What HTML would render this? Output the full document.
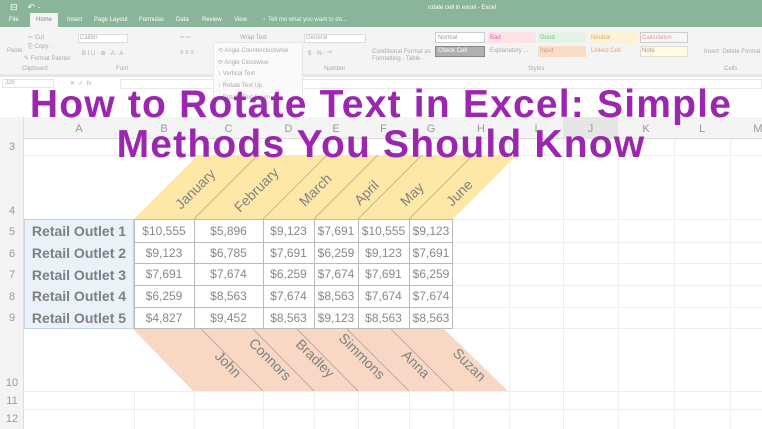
<!DOCTYPE html>
<html><head><meta charset="utf-8"><style>
*{margin:0;padding:0;box-sizing:border-box}
body{width:762px;height:429px;overflow:hidden;background:#fff;font-family:"Liberation Sans",sans-serif;position:relative}
.a{position:absolute}
.t{font-size:6px;color:#aaa;white-space:nowrap}
.hdr{font-size:11px;color:#999;text-align:center}
.rn{font-size:11px;color:#999;width:24px;text-align:center}
.cell{position:absolute;font-size:12px;color:#888;text-align:center;line-height:22px}
.ol{position:absolute;left:24px;width:110px;background:#eaf1f9;color:#7f7f7f;font-weight:bold;font-size:14px;line-height:22px;text-align:center}
.title{position:absolute;left:0;width:762px;text-align:center;color:#9b27af;font-weight:bold;font-size:39px;line-height:42px;letter-spacing:1.2px}
</style></head><body>
<div class="a" style="left:0;top:0;width:762px;height:27px;background:#8ab59a"></div>
<div class="a" style="left:30px;top:13px;width:28px;height:14px;background:#f3f3f3"></div>
<div class="a t" style="left:9px;top:17px;color:#fff">File</div>
<div class="a t" style="left:36px;top:17px;color:#888">Home</div>
<div class="a t" style="left:67px;top:17px;color:#fff">Insert</div>
<div class="a t" style="left:94px;top:17px;color:#fff">Page Layout</div>
<div class="a t" style="left:139px;top:17px;color:#fff">Formulas</div>
<div class="a t" style="left:176px;top:17px;color:#fff">Data</div>
<div class="a t" style="left:202px;top:17px;color:#fff">Review</div>
<div class="a t" style="left:234px;top:17px;color:#fff">View</div>
<div class="a t" style="left:262px;top:17px;color:#dfe">♀ Tell me what you want to do...</div>
<div class="a t" style="left:428px;top:5px;color:#fff">rotate cell in excel - Excel</div>
<div class="a t" style="left:10px;top:2px;color:#fff;font-size:9px">⊟ &nbsp;&nbsp; ↶ ·</div>
<div class="a" style="left:0;top:27px;width:762px;height:50px;background:#f4f4f4;border-bottom:3px solid #e6e6e6"></div>
<div class="a t" style="left:28px;top:34px">✂ Cut</div>
<div class="a t" style="left:28px;top:44px">⎘ Copy ·</div>
<div class="a t" style="left:24px;top:55px">✎ Format Painter</div>
<div class="a t" style="left:7px;top:48px">Paste</div>
<div class="a t" style="left:22px;top:66px">Clipboard</div>
<div class="a" style="left:78px;top:34px;width:50px;height:9px;border:1px solid #ddd;background:#fff"></div>
<div class="a t" style="left:80px;top:35px">Calibri</div>
<div class="a t" style="left:82px;top:50px">B I U · ⊞ · A · A</div>
<div class="a t" style="left:116px;top:66px">Font</div>
<div class="a t" style="left:180px;top:35px">═ ═ </div>
<div class="a t" style="left:180px;top:50px">≡ ≡ ≡</div>
<div class="a t" style="left:240px;top:35px">Wrap Text</div>
<div class="a" style="left:304px;top:34px;width:62px;height:9px;border:1px solid #ddd;background:#fff"></div>
<div class="a t" style="left:306px;top:35px">General</div>
<div class="a t" style="left:308px;top:50px">$ · % ·  ⁰⁰</div>
<div class="a t" style="left:324px;top:66px">Number</div>
<div class="a t" style="left:372px;top:49px">Conditional Format as</div>
<div class="a t" style="left:372px;top:56px">Formatting · Table ·</div>
<div class="a" style="left:435px;top:32px;width:50px;height:11px;background:#fff;border:1px solid #ccc"></div><div class="a t" style="left:438px;top:35px;color:#999">Normal</div>
<div class="a" style="left:488px;top:32px;width:48px;height:11px;background:#fbe3e6"></div><div class="a t" style="left:490px;top:35px;color:#e5a">Bad</div>
<div class="a" style="left:538px;top:32px;width:48px;height:11px;background:#e4f3e6"></div><div class="a t" style="left:540px;top:35px;color:#7b7">Good</div>
<div class="a" style="left:589px;top:32px;width:48px;height:11px;background:#fdf2d4"></div><div class="a t" style="left:591px;top:35px;color:#ca8">Neutral</div>
<div class="a" style="left:640px;top:32px;width:48px;height:11px;background:#f6f6f6;border:1px solid #ccc"></div><div class="a t" style="left:642px;top:35px;color:#e99">Calculation</div>
<div class="a" style="left:435px;top:46px;width:50px;height:11px;background:#b0b0b0;border:1px solid #888"></div><div class="a t" style="left:438px;top:48px;color:#fff">Check Cell</div>
<div class="a t" style="left:490px;top:48px">Explanatory ...</div>
<div class="a" style="left:538px;top:46px;width:48px;height:11px;background:#fbdcc6"></div><div class="a t" style="left:540px;top:48px;color:#c98">Input</div>
<div class="a t" style="left:591px;top:48px;color:#e9a070">Linked Cell</div>
<div class="a" style="left:640px;top:46px;width:48px;height:11px;background:#fffbe0;border:1px solid #ddd"></div><div class="a t" style="left:642px;top:48px;color:#999">Note</div>
<div class="a t" style="left:528px;top:66px">Styles</div>
<div class="a t" style="left:704px;top:49px">Insert &nbsp;Delete Format</div>
<div class="a t" style="left:724px;top:66px">Cells</div>
<div class="a" style="left:0;top:77px;width:762px;height:40px;background:#fff"></div>
<div class="a" style="left:2px;top:79px;width:52px;height:9px;border:1px solid #e6e6e6"></div>
<div class="a t" style="left:5px;top:80px">J26</div>
<div class="a t" style="left:70px;top:80px">✕ &nbsp;✓ &nbsp;fx</div>
<div class="a" style="left:120px;top:79px;width:642px;height:10px;border:1px solid #e8e8e8"></div>
<div class="a" style="left:213px;top:42px;width:90px;height:76px;background:#fafafa;border:1px solid #e8e8e8"></div>
<div class="a t" style="left:218px;top:47px">⟲ Angle Counterclockwise</div>
<div class="a t" style="left:218px;top:59px">⟳ Angle Clockwise</div>
<div class="a t" style="left:218px;top:71px">↕ Vertical Text</div>
<div class="a t" style="left:218px;top:83px">↑ Rotate Text Up</div>
<div class="a t" style="left:218px;top:95px">↓ Rotate Text Down</div>
<div class="a" style="left:0;top:117px;width:762px;height:22px;background:#f4f4f4;border-bottom:1px solid #ddd"></div>
<div class="a" style="left:0;top:117px;width:24px;height:312px;background:#f4f4f4;border-right:1px solid #ddd"></div>
<div class="a" style="left:563px;top:117px;width:55px;height:22px;background:#e6e6e6"></div>
<div class="a hdr" style="left:24px;top:123px;width:110px">A</div>
<div class="a hdr" style="left:134px;top:123px;width:60px">B</div>
<div class="a hdr" style="left:194px;top:123px;width:69px">C</div>
<div class="a hdr" style="left:263px;top:123px;width:51px">D</div>
<div class="a hdr" style="left:314px;top:123px;width:44px">E</div>
<div class="a hdr" style="left:358px;top:123px;width:51px">F</div>
<div class="a hdr" style="left:409px;top:123px;width:44px">G</div>
<div class="a hdr" style="left:453px;top:123px;width:56px">H</div>
<div class="a hdr" style="left:509px;top:123px;width:54px">I</div>
<div class="a hdr" style="left:563px;top:123px;width:55px">J</div>
<div class="a hdr" style="left:618px;top:123px;width:56px">K</div>
<div class="a hdr" style="left:674px;top:123px;width:56px">L</div>
<div class="a hdr" style="left:730px;top:123px;width:56px">M</div>
<div class="a rn" style="left:0;top:141px">3</div>
<div class="a rn" style="left:0;top:205px">4</div>
<div class="a rn" style="left:0;top:226px">5</div>
<div class="a rn" style="left:0;top:248px">6</div>
<div class="a rn" style="left:0;top:269px">7</div>
<div class="a rn" style="left:0;top:291px">8</div>
<div class="a rn" style="left:0;top:312px">9</div>
<div class="a rn" style="left:0;top:377px">10</div>
<div class="a rn" style="left:0;top:395px">11</div>
<div class="a rn" style="left:0;top:413px">12</div>
<svg class="a" style="left:0;top:0" width="762" height="429">
<g stroke="#eee" stroke-width="1">
<line x1="24" y1="155.5" x2="762" y2="155.5"/><line x1="24" y1="219.5" x2="762" y2="219.5"/>
<line x1="24" y1="391.5" x2="762" y2="391.5"/><line x1="24" y1="409.5" x2="762" y2="409.5"/>
<line x1="453" y1="242.5" x2="762" y2="242.5"/><line x1="453" y1="263.5" x2="762" y2="263.5"/>
<line x1="453" y1="285.5" x2="762" y2="285.5"/><line x1="453" y1="307.5" x2="762" y2="307.5"/><line x1="453" y1="328.5" x2="762" y2="328.5"/>
<line x1="509.5" y1="139" x2="509.5" y2="429"/><line x1="563.5" y1="139" x2="563.5" y2="429"/><line x1="618.5" y1="139" x2="618.5" y2="429"/><line x1="674.5" y1="139" x2="674.5" y2="429"/><line x1="730.5" y1="139" x2="730.5" y2="429"/>
<line x1="134.5" y1="391" x2="134.5" y2="429"/><line x1="194.5" y1="391" x2="194.5" y2="429"/><line x1="263.5" y1="391" x2="263.5" y2="429"/><line x1="314.5" y1="391" x2="314.5" y2="429"/><line x1="358.5" y1="391" x2="358.5" y2="429"/><line x1="409.5" y1="391" x2="409.5" y2="429"/><line x1="453.5" y1="391" x2="453.5" y2="429"/>
</g>
<polygon points="134,219 453,219 517,155 198,155" fill="#fde8a8"/>
<g stroke="#c8b98a" stroke-width="1"><line x1="194" y1="219" x2="258" y2="155"/><line x1="263" y1="219" x2="327" y2="155"/><line x1="314" y1="219" x2="378" y2="155"/><line x1="358" y1="219" x2="422" y2="155"/><line x1="409" y1="219" x2="473" y2="155"/></g>
<polygon points="132,328 443,328 508,391 193,391" fill="#f8d8c4"/>
<g stroke="#c8a898" stroke-width="1"><line x1="200" y1="328" x2="263" y2="391"/><line x1="252" y1="328" x2="314" y2="391"/><line x1="296" y1="328" x2="358" y2="391"/><line x1="346" y1="328" x2="409" y2="391"/><line x1="390" y1="328" x2="453" y2="391"/></g>
<g fill="#808080" font-family="Liberation Sans,sans-serif" font-size="14">
<text transform="translate(181,210) rotate(-45)">January</text>
<text transform="translate(240,213) rotate(-45)">February</text>
<text transform="translate(305,207) rotate(-45)">March</text>
<text transform="translate(360,206) rotate(-45)">April</text>
<text transform="translate(406,207) rotate(-45)">May</text>
<text transform="translate(452,207) rotate(-45)">June</text>
<text transform="translate(214,357) rotate(45)">John</text>
<text transform="translate(248,344) rotate(45)">Connors</text>
<text transform="translate(295,345) rotate(45)">Bradley</text>
<text transform="translate(338,339) rotate(45)">Simmons</text>
<text transform="translate(401,356) rotate(45)">Anna</text>
<text transform="translate(452,354) rotate(45)">Suzan</text>
</g>
<g stroke="#bbb" stroke-width="1" fill="none">
<rect x="134.5" y="219.5" width="318" height="109"/>
<line x1="134" y1="242.5" x2="453" y2="242.5"/><line x1="134" y1="263.5" x2="453" y2="263.5"/><line x1="134" y1="285.5" x2="453" y2="285.5"/><line x1="134" y1="307.5" x2="453" y2="307.5"/>
<line x1="194.5" y1="219" x2="194.5" y2="328"/><line x1="263.5" y1="219" x2="263.5" y2="328"/><line x1="314.5" y1="219" x2="314.5" y2="328"/><line x1="358.5" y1="219" x2="358.5" y2="328"/><line x1="409.5" y1="219" x2="409.5" y2="328"/>
</g>
</svg>
<div class="ol" style="top:220px">Retail Outlet 1</div>
<div class="ol" style="top:242px">Retail Outlet 2</div>
<div class="ol" style="top:264px">Retail Outlet 3</div>
<div class="ol" style="top:285px">Retail Outlet 4</div>
<div class="ol" style="top:307px">Retail Outlet 5</div>
<div class="a" style="left:24px;top:219px;width:110px;height:110px;border:1px solid #c8d4e4;pointer-events:none"></div>
<div class="cell" style="left:134px;top:220px;width:60px">$10,555</div><div class="cell" style="left:194px;top:220px;width:69px">$5,896</div><div class="cell" style="left:263px;top:220px;width:51px">$9,123</div><div class="cell" style="left:314px;top:220px;width:44px">$7,691</div><div class="cell" style="left:358px;top:220px;width:51px">$10,555</div><div class="cell" style="left:409px;top:220px;width:44px">$9,123</div>
<div class="cell" style="left:134px;top:242px;width:60px">$9,123</div><div class="cell" style="left:194px;top:242px;width:69px">$6,785</div><div class="cell" style="left:263px;top:242px;width:51px">$7,691</div><div class="cell" style="left:314px;top:242px;width:44px">$6,259</div><div class="cell" style="left:358px;top:242px;width:51px">$9,123</div><div class="cell" style="left:409px;top:242px;width:44px">$7,691</div>
<div class="cell" style="left:134px;top:263px;width:60px">$7,691</div><div class="cell" style="left:194px;top:263px;width:69px">$7,674</div><div class="cell" style="left:263px;top:263px;width:51px">$6,259</div><div class="cell" style="left:314px;top:263px;width:44px">$7,674</div><div class="cell" style="left:358px;top:263px;width:51px">$7,691</div><div class="cell" style="left:409px;top:263px;width:44px">$6,259</div>
<div class="cell" style="left:134px;top:285px;width:60px">$6,259</div><div class="cell" style="left:194px;top:285px;width:69px">$8,563</div><div class="cell" style="left:263px;top:285px;width:51px">$7,674</div><div class="cell" style="left:314px;top:285px;width:44px">$8,563</div><div class="cell" style="left:358px;top:285px;width:51px">$7,674</div><div class="cell" style="left:409px;top:285px;width:44px">$7,674</div>
<div class="cell" style="left:134px;top:307px;width:60px">$4,827</div><div class="cell" style="left:194px;top:307px;width:69px">$9,452</div><div class="cell" style="left:263px;top:307px;width:51px">$8,563</div><div class="cell" style="left:314px;top:307px;width:44px">$9,123</div><div class="cell" style="left:358px;top:307px;width:51px">$8,563</div><div class="cell" style="left:409px;top:307px;width:44px">$8,563</div>
<div class="title" style="top:84px">How to Rotate Text in Excel: Simple</div>
<div class="title" style="top:124px">Methods You Should Know</div>
</body></html>
